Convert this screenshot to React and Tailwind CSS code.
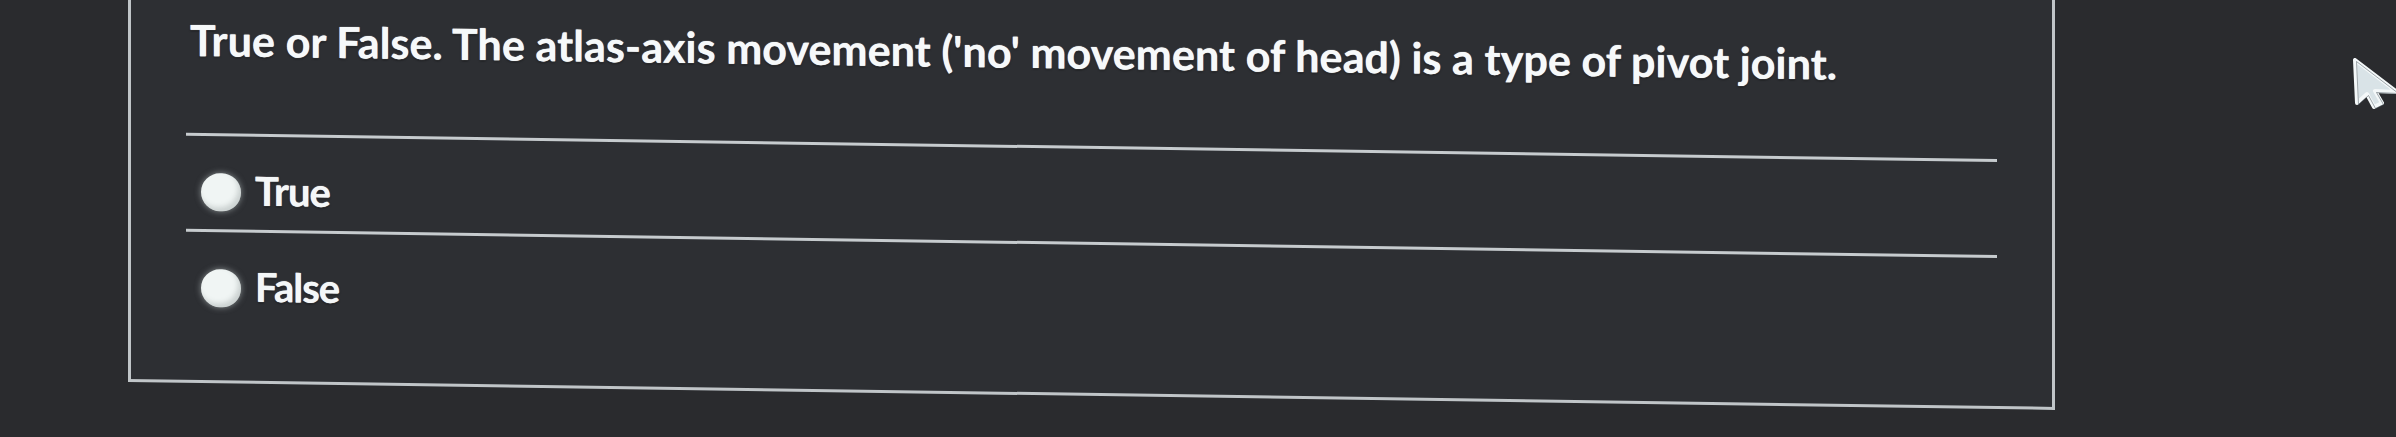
import React from "react";

const options = ["True", "False"];

function Radio() {
  return (
    <span className="block w-[40px] h-[38px] shrink-0 rounded-full bg-[#f0f5f4] shadow-[0_0_6px_rgba(230,240,240,0.5),inset_-3px_-4px_5px_rgba(120,130,130,0.3)]" />
  );
}

function Cursor() {
  return (
    <svg
      className="absolute left-[2352px] top-[58px]"
      width="48"
      height="52"
      viewBox="0 0 48 52"
    >
      <path
        d="M3 2 L5 45 L15 36 L22 49 L30 45 L23 33 L45 34 Z"
        fill="#d9e3e7"
        stroke="#f4f8f9"
        strokeWidth="4"
        strokeLinejoin="round"
      />
      <path
        d="M3 2 L5 45 L15 36 L22 49 L30 45 L23 33 L45 34 Z"
        fill="none"
        stroke="#46525a"
        strokeWidth="1"
        strokeLinejoin="round"
        transform="translate(1.5 1.5)"
        opacity="0.5"
      />
    </svg>
  );
}

export default function App() {
  return (
    <div
      className="relative w-[2396px] h-[437px] overflow-hidden bg-[#2a2b2e]"
      style={{ fontFamily: "Lato, 'Open Sans', sans-serif" }}
    >
      {/* quiz card; top edge runs off the screen */}
      <div className="-mt-[40px] ml-[128px] w-[1927px] h-[422px] border-x-[3px] border-b-[3px] border-[#c0c5c8] bg-[#2d2f33] origin-top-left skew-y-[0.83deg] px-[55px] pt-[54px]">
        <h2 className="text-[43px] leading-[50px] font-bold text-[#f6f9fa] pl-[4px] tracking-[0.1px] [text-shadow:0_0_1px_#ffffff,0_1px_2px_rgba(0,0,0,0.7)]">
          True or False. The atlas-axis movement ('no' movement of head) is a
          type of pivot joint.
        </h2>

        <div className="mt-[68px]">
          {options.map((opt) => (
            <div key={opt}>
              <div className="h-[3px] bg-[#c6cbce]" />
              <label className="flex items-center gap-[14px] h-[93px] pt-[18px] pl-[15px]">
                <Radio />
                <span className="text-[40px] leading-[48px] font-bold text-[#f4f7f8] -mt-[4px] tracking-[-1px] [text-shadow:0_0_1px_#ffffff,0_1px_2px_rgba(0,0,0,0.7)]">
                  {opt}
                </span>
              </label>
            </div>
          ))}
        </div>
      </div>

      <Cursor />
    </div>
  );
}
